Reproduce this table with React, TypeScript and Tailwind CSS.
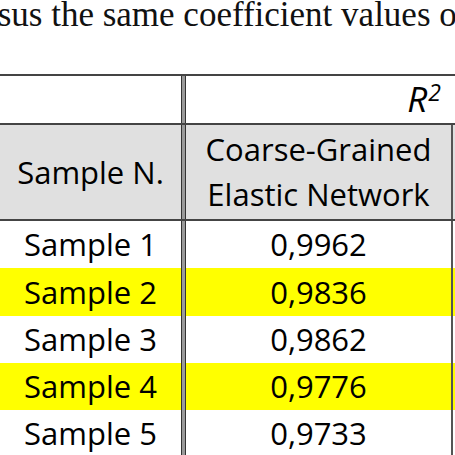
import React from 'react';

const rows = [
  { name: 'Sample 1', value: '0,9962', hl: false, h: 'h-[47px]' },
  { name: 'Sample 2', value: '0,9836', hl: true, h: 'h-[48px]' },
  { name: 'Sample 3', value: '0,9862', hl: false, h: 'h-[47px]' },
  { name: 'Sample 4', value: '0,9776', hl: true, h: 'h-[47px]' },
  { name: 'Sample 5', value: '0,9733', hl: false, h: 'h-[47px]' },
];

const cell = "font-['Open_Sans',sans-serif] text-[31px] text-black";

// the double rule between the two columns
const Divider: React.FC = () => (
  <div className="w-[5px] self-stretch border-x-[1.5px] border-[#333] bg-[#9a9a9a]" />
);

const App: React.FC = () => {
  return (
    <div className="w-[455px] h-[455px] overflow-hidden bg-white">
      <div className="h-[74px] overflow-hidden">
        <p className="ml-[-47px] mt-[-3px] whitespace-nowrap font-['Liberation_Serif',serif] text-[35px] leading-[36px] text-[#111]">
          versus the same coefficient values of
        </p>
      </div>

      <div className="h-[2px] bg-[#444]" />
      <div className="flex h-[47px]">
        <div className="w-[181px]" />
        <Divider />
        <div className="flex flex-1 items-start justify-end pr-[14px] pt-[3px] font-['Open_Sans',sans-serif] text-black">
          <span className="text-[35px] leading-[40px] font-medium italic">R</span>
          <span className="ml-[1px] mt-[1px] text-[23px] leading-[24px] italic">2</span>
        </div>
      </div>
      <div className="h-[2px] bg-[#444]" />

      <div className="flex h-[94px] bg-[#e0e0e0]">
        <div className={`flex w-[181px] items-center justify-center ${cell}`}>Sample N.</div>
        <Divider />
        <div className={`flex w-[265px] flex-col items-center justify-center leading-[45px] ${cell}`}>
          <span>Coarse-Grained</span>
          <span>Elastic Network</span>
        </div>
        <div className="w-[1.5px] bg-[#555]" />
        <div className="flex-1" />
      </div>
      <div className="h-[2px] bg-[#444]" />

      {rows.map((r) => (
        <div key={r.name} className={`flex ${r.h} ${r.hl ? 'bg-[#ffff00]' : 'bg-white'}`}>
          <div className={`flex w-[181px] items-center justify-center ${cell}`}>{r.name}</div>
          <Divider />
          <div className={`flex w-[265px] items-center justify-center ${cell}`}>{r.value}</div>
          <div className="w-[1.5px] bg-[#555]" />
          <div className="flex-1" />
        </div>
      ))}
    </div>
  );
};

export default App;
